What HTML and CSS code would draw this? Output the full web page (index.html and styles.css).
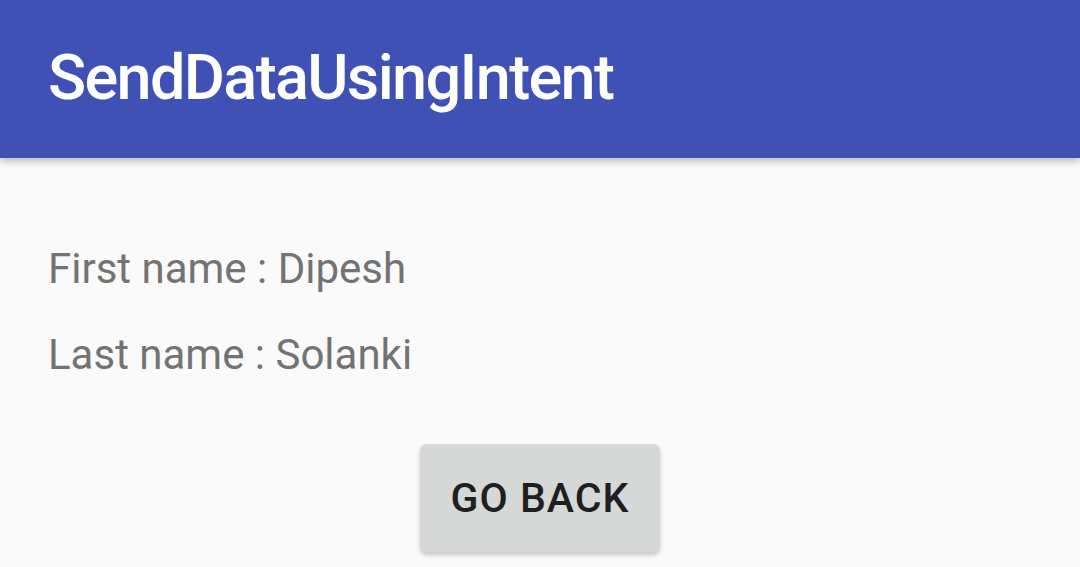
FILE: index.html
```html
<!DOCTYPE html>
<html>
<head>
<meta charset="utf-8">
<link rel="stylesheet" href="styles.css">
</head>
<body>
<header class="toolbar">
  <h1 class="title">SendDataUsingIntent</h1>
</header>
<main class="content">
  <p class="line">First name : Dipesh</p>
  <p class="line">Last name : Solanki</p>
  <div class="actions">
    <button class="btn">GO BACK</button>
  </div>
</main>
</body>
</html>
```

FILE: styles.css
```css
html, body {
  margin: 0;
  padding: 0;
  background: #fafafa;
  font-family: Roboto, "Noto Sans", sans-serif;
  overflow: hidden;
  height: 567px;
}
.toolbar {
  height: 158px;
  background: #3f51b5;
  display: flex;
  align-items: center;
  padding-left: 48px;
  box-shadow: 0 3px 8px rgba(0,0,0,0.28);
  position: relative;
  z-index: 1;
}
.title {
  margin: 0;
  color: #ffffff;
  font-weight: 500;
  font-size: 63px;
  line-height: 1;
  letter-spacing: -1.65px;
  padding-bottom: 4px;
}
.content {
  padding: 0 48px;
}
.line {
  margin: 0;
  color: #737373;
  font-size: 42px;
  line-height: 86px;
}
.line:first-child {
  margin-top: 68px;
}
.actions {
  display: flex;
  justify-content: center;
  padding-top: 46px;
}
.btn {
  width: 240px;
  height: 108px;
  border: none;
  border-radius: 6px;
  background: #d6d7d7;
  color: #1f1f1f;
  font-family: Roboto, "Noto Sans", sans-serif;
  font-weight: 500;
  font-size: 41px;
  letter-spacing: 1px;
  box-shadow: 0 3px 4px rgba(0,0,0,0.2);
  padding: 0;
}
```
